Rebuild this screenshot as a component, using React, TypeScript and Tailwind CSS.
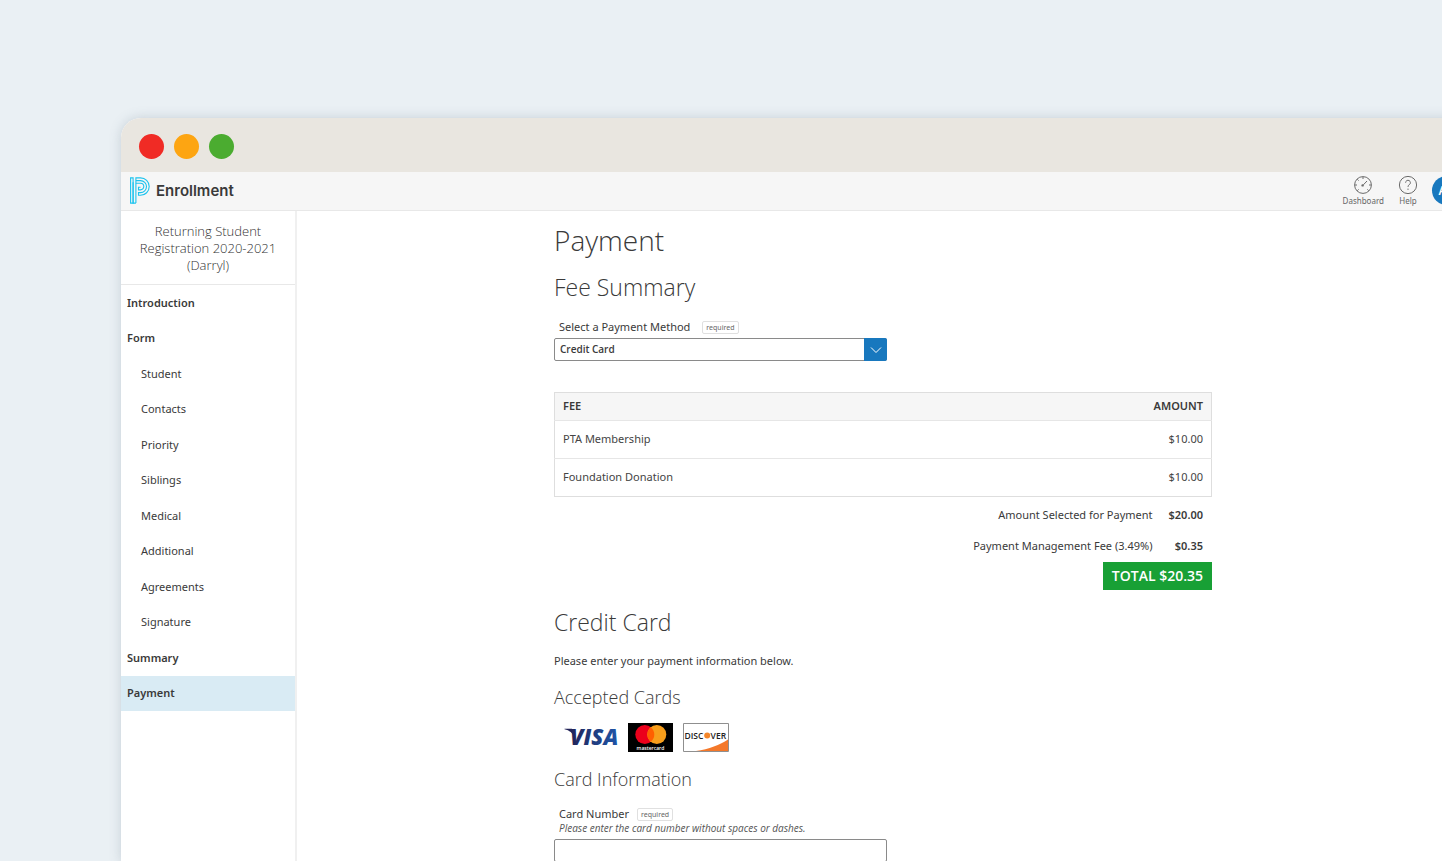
import React from 'react';

interface NavItem {
  label: string;
  child?: boolean;
  active?: boolean;
}

interface Fee {
  name: string;
  amount: string;
}

const navItems: NavItem[] = [
  { label: 'Introduction' },
  { label: 'Form' },
  { label: 'Student', child: true },
  { label: 'Contacts', child: true },
  { label: 'Priority', child: true },
  { label: 'Siblings', child: true },
  { label: 'Medical', child: true },
  { label: 'Additional', child: true },
  { label: 'Agreements', child: true },
  { label: 'Signature', child: true },
  { label: 'Summary' },
  { label: 'Payment', active: true },
];

const fees: Fee[] = [
  { name: 'PTA Membership', amount: '$10.00' },
  { name: 'Foundation Donation', amount: '$10.00' },
];

const Logo: React.FC = () => (
  <svg viewBox="0 0 21 27" className="w-[21px] h-[27px]" fill="none" stroke="#1cc3ee" strokeWidth="1.1" aria-hidden="true">
    <path d="M1.6.9h2.5v25.2H1.6z" />
    <path d="M6.9 26.1H4.1V5.2" />
    <path d="M6.9 26.1V.9h4.600a8.700 8.700 0 0 1 0 17.400H9.500v-2.700h2a6 6 0 0 0 0-12H6.900" />
    <path d="M6.9 6.3h4.600a3.300 3.300 0 0 1 0 6.600H9.500v-2.700h2" />
  </svg>
);

const GaugeIcon: React.FC = () => (
  <svg viewBox="0 0 20 20" className="size-5" fill="none" stroke="#6b6b6b" strokeWidth="1" aria-hidden="true">
    <circle cx="10" cy="10" r="8.4" />
    <path d="M10 2v2M4.3 4.3l1.3 1.3M2 10h2M16 10h2M4.3 15.7l1.3-1.3M15.7 15.7l-1.3-1.3M10.4 9.8l3.6-3.8" />
    <circle cx="9.6" cy="10.4" r="1.2" fill="#6b6b6b" stroke="none" />
  </svg>
);

const HelpIcon: React.FC = () => (
  <svg viewBox="0 0 20 20" className="size-5" fill="none" stroke="#6b6b6b" strokeWidth="1" aria-hidden="true">
    <circle cx="10" cy="10" r="8.6" />
    <path d="M7.6 7.7a2.4 2.4 0 1 1 3.7 2c-.9.6-1.3 1-1.3 2.2" />
    <path d="M10 13.6v1.3" />
  </svg>
);

const VisaLogo: React.FC = () => (
  <svg viewBox="0 0 54 29" className="w-[54px] h-[29px] overflow-visible" role="img" aria-label="Visa">
    <defs>
      <linearGradient id="visa" x1="0" x2="1" y1="0" y2="0">
        <stop offset="0" stopColor="#222357" />
        <stop offset="1" stopColor="#1f55a8" />
      </linearGradient>
    </defs>
    <path d="M.5 5.8H7c1.2 0 2 .6 2.3 1.800l1.400 7.200C8.700 9.900 5.500 7.400.5 6.300z" fill="#222357" />
    <text x="6" y="22" fontFamily="Open Sans, sans-serif" fontWeight="800" fontStyle="italic" fontSize="22" fill="url(#visa)">VISA</text>
  </svg>
);

const MastercardLogo: React.FC = () => (
  <svg viewBox="0 0 45 29" className="w-[45px] h-[29px]" role="img" aria-label="Mastercard">
    <path d="M0 0h45v29H0z" fill="#000" />
    <circle cx="16.8" cy="11.5" r="9.5" fill="#eb001b" />
    <circle cx="28.8" cy="11.5" r="9.5" fill="#f79e1b" />
    <path d="M22.8 4.140a9.500 9.500 0 0 1 0 14.720a9.500 9.500 0 0 1 0-14.720z" fill="#ff5f00" />
    <text x="22.5" y="26.5" textAnchor="middle" fontFamily="Open Sans, sans-serif" fontWeight="600" fontSize="5" fill="#fff">mastercard</text>
  </svg>
);

const DiscoverLogo: React.FC = () => (
  <svg viewBox="0 0 46 29" className="w-[46px] h-[29px]" role="img" aria-label="Discover">
    <path d="M.5.5h45v28H.5z" fill="#fff" stroke="#8f8f8f" />
    <path d="M45 16.5V28H13C26 26 37 22 45 16.5z" fill="#f4782a" />
    <text x="1.5" y="15.6" fontFamily="Open Sans, sans-serif" fontWeight="600" fontSize="8.5" fill="#222">DISC</text>
    <circle cx="24.2" cy="12.5" r="3" fill="#f4862a" />
    <text x="27.6" y="15.6" fontFamily="Open Sans, sans-serif" fontWeight="600" fontSize="8.5" fill="#222">VER</text>
  </svg>
);

const Required: React.FC = () => (
  <span className="rounded-xs border border-[#e0e0e0] px-[3px] text-[7px] leading-[11px] text-[#666]">required</span>
);

const Sidebar: React.FC = () => (
  <aside className="w-44 shrink-0 border-r-2 border-[#f0f0f0]">
    <p className="border-b border-[#e8e8e8] px-3 pt-3 pb-[10px] text-center font-['Open_Sans',sans-serif] text-[13px] leading-[17px] font-light text-[#333]">
      Returning Student Registration 2020-2021 (Darryl)
    </p>
    <nav className="grid h-[426px] auto-rows-fr">
      {navItems.map(item => (
        <a
          key={item.label}
          href="#"
          className={`flex items-center text-[11px] ${item.child ? 'pl-5' : 'pl-[6px] font-semibold'} ${item.active ? 'bg-[#d9ebf4]' : ''}`}
        >
          {item.label}
        </a>
      ))}
    </nav>
  </aside>
);

const FeeTable: React.FC = () => (
  <table className="mt-[31px] w-full border border-[#dedede] text-[11px]">
    <thead>
      <tr className="h-7 bg-[#f6f6f6]">
        <th className="px-2 text-left font-semibold">FEE</th>
        <th className="px-2 text-right font-semibold">AMOUNT</th>
      </tr>
    </thead>
    <tbody>
      {fees.map(fee => (
        <tr key={fee.name} className="h-[38px] border-t border-[#e6e6e6] text-[#444]">
          <td className="px-2">{fee.name}</td>
          <td className="px-2 text-right">{fee.amount}</td>
        </tr>
      ))}
    </tbody>
  </table>
);

const App: React.FC = () => {
  return (
    <div className="h-screen overflow-hidden bg-[#eaf0f4] pt-[118px] pl-[121px] font-['Noto_Sans',sans-serif] text-[#3a3a3a]">
      <div className="-mr-[27px] flex min-h-full flex-col overflow-hidden rounded-tl-[20px] bg-white shadow-[0_0_12px_rgba(90,110,130,0.25)]">
        <div className="flex h-[54px] shrink-0 items-center gap-[10px] bg-[#e9e6e0] pt-[3px] pl-[18px]">
          <span className="size-[25px] rounded-full bg-[#f02b25]" />
          <span className="size-[25px] rounded-full bg-[#fda512]" />
          <span className="size-[25px] rounded-full bg-[#4bac30]" />
        </div>

        <header className="flex h-[39px] shrink-0 items-center justify-between border-b border-[#e8e8e8] bg-[#f6f6f6] px-2 pb-px">
          <div className="flex items-center gap-[6px]">
            <Logo />
            <span className="pt-px font-[Inter,sans-serif] text-[15px] font-semibold">Enrollment</span>
          </div>
          <div className="flex items-center gap-[14px] text-[8px] leading-[10px] text-[#666]">
            <a href="#" className="flex flex-col items-center gap-px">
              <GaugeIcon />
              Dashboard
            </a>
            <a href="#" className="flex flex-col items-center gap-px">
              <HelpIcon />
              Help
            </a>
            <button className="size-[29px] rounded-full bg-[#1878be] text-[12px] font-semibold text-white">AB</button>
          </div>
        </header>

        <div className="flex grow">
          <Sidebar />
          <main className="grow">
            <div className="mx-auto max-w-[658px] pt-[13px]">
              <h1 className="font-['Open_Sans',sans-serif] text-[28px] leading-8 font-light">Payment</h1>
              <h2 className="mt-[15px] font-['Open_Sans',sans-serif] text-[23px] leading-8 font-light">Fee Summary</h2>

              <div className="mt-[14px] flex items-center gap-3 pl-[5px]">
                <label htmlFor="payment-method" className="text-[11px] leading-5">Select a Payment Method</label>
                <Required />
              </div>
              <div className="relative mt-px w-[333px]">
                <select
                  id="payment-method"
                  className="block h-[23px] w-full appearance-none rounded-xs border border-[#8a8a8a] pl-[5px] font-['Open_Sans',sans-serif] text-[10px] font-semibold"
                >
                  <option>Credit Card</option>
                </select>
                <span className="pointer-events-none absolute inset-y-0 right-0 flex w-[23px] items-center justify-center rounded-r-xs bg-[#1878be]">
                  <svg viewBox="0 0 12 8" className="h-2 w-3" fill="none" stroke="#fff" aria-hidden="true">
                    <path d="M1 1.5l5 5 5-5" />
                  </svg>
                </span>
              </div>

              <FeeTable />

              <dl className="mt-[3px] grid grid-cols-[1fr_auto] auto-rows-[31px] items-center gap-x-4 pr-[9px] text-right text-[11px]">
                <dt>Amount Selected for Payment</dt>
                <dd className="font-semibold">$20.00</dd>
                <dt>Payment Management Fee (3.49%)</dt>
                <dd className="font-semibold">$0.35</dd>
              </dl>
              <p className="ml-auto w-fit bg-[#18a035] px-[9px] font-['Open_Sans',sans-serif] text-[14px] leading-7 font-semibold text-white">TOTAL $20.35</p>

              <h2 className="mt-4 font-['Open_Sans',sans-serif] text-[23px] leading-8 font-light">Credit Card</h2>
              <p className="mt-[13px] text-[11px] leading-5">Please enter your payment information below.</p>

              <h3 className="mt-3 font-['Open_Sans',sans-serif] text-[18px] leading-7 font-light">Accepted Cards</h3>
              <div className="mt-3 flex gap-[10px] pl-[10px]">
                <VisaLogo />
                <MastercardLogo />
                <DiscoverLogo />
              </div>

              <h3 className="mt-[13px] font-['Open_Sans',sans-serif] text-[18px] leading-7 font-light">Card Information</h3>
              <div className="mt-[13px] flex items-center gap-2 pl-[5px]">
                <label htmlFor="card-number" className="text-[11px] leading-4">Card Number</label>
                <Required />
              </div>
              <p id="card-number-hint" className="pl-[5px] font-['Open_Sans',sans-serif] text-[10px] leading-3 text-[#555] italic">
                Please enter the card number without spaces or dashes.
              </p>
              <input
                id="card-number"
                type="text"
                aria-describedby="card-number-hint"
                className="mt-[5px] block h-[23px] w-[333px] rounded-xs border border-[#8a8a8a] px-[5px] text-[10px]"
              />
            </div>
          </main>
        </div>
      </div>
    </div>
  );
};

export default App;
